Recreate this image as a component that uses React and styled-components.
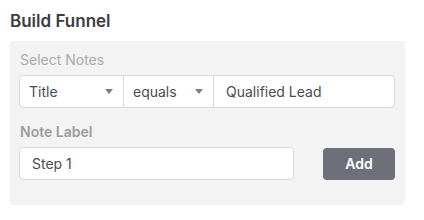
import React from "react";
import styled, { createGlobalStyle } from "styled-components";

const Global = createGlobalStyle`
  html, body { margin: 0; padding: 0; background: #fff; }
  body { font-family: Inter, "Noto Sans", sans-serif; -webkit-font-smoothing: antialiased; }
  * { box-sizing: border-box; }
`;

const Page = styled.div`
  width: 424px;
  padding: 11px 19px 0 10px;
`;

const Title = styled.h2`
  margin: 0 0 9px 0;
  font-size: 17px;
  line-height: 21px;
  font-weight: 600;
  color: #3a3d44;
`;

const Panel = styled.div`
  background: #f3f3f3;
  border-radius: 3px;
  padding: 10px 10px 25px 9px;
  display: flex;
  flex-direction: column;
`;

const Label = styled.div`
  font-size: 14px;
  line-height: 17px;
  color: ${(p) => (p.$bold ? "#9a9ca2" : "#a9abaf")};
  font-weight: ${(p) => (p.$bold ? 600 : 400)};
  margin: 0 0 7px 1px;
`;

const Group = styled.div`
  display: flex;
  height: 33px;
  background: #fff;
  border: 1px solid #d9d9d9;
  border-radius: 4px;
  margin-bottom: 15px;
  overflow: hidden;
`;

const Select = styled.div`
  width: ${(p) => p.$w}px;
  display: flex;
  align-items: center;
  justify-content: space-between;
  padding: 0 10px 0 9px;
  border-right: 1px solid #d9d9d9;
  font-size: 14px;
  color: #4a4d52;
`;

const Caret = styled.span`
  width: 0;
  height: 0;
  border-left: 4px solid transparent;
  border-right: 4px solid transparent;
  border-top: 5px solid #7a7d82;
`;

const Field = styled.div`
  flex: 1;
  display: flex;
  align-items: center;
  padding: 0 12px;
  font-size: 14px;
  color: #4a4d52;
`;

const Row = styled.div`
  display: flex;
  align-items: center;
  justify-content: space-between;
`;

const Input = styled.div`
  width: 275px;
  height: 33px;
  background: #fff;
  border: 1px solid #d9d9d9;
  border-radius: 4px;
  display: flex;
  align-items: center;
  padding: 0 12px;
  font-size: 14px;
  color: #4a4d52;
`;

const Button = styled.button`
  width: 72px;
  height: 32px;
  border: none;
  border-radius: 4px;
  background: #6d7079;
  color: #fff;
  font-family: Inter, "Noto Sans", sans-serif;
  font-size: 14px;
  font-weight: 600;
`;

export default function App() {
  return (
    <Page>
      <Global />
      <Title>Build Funnel</Title>
      <Panel>
        <Label>Select Notes</Label>
        <Group>
          <Select $w={104}>
            Title <Caret />
          </Select>
          <Select $w={90}>
            equals <Caret />
          </Select>
          <Field>Qualified Lead</Field>
        </Group>
        <Label $bold>Note Label</Label>
        <Row>
          <Input>Step 1</Input>
          <Button>Add</Button>
        </Row>
      </Panel>
    </Page>
  );
}
